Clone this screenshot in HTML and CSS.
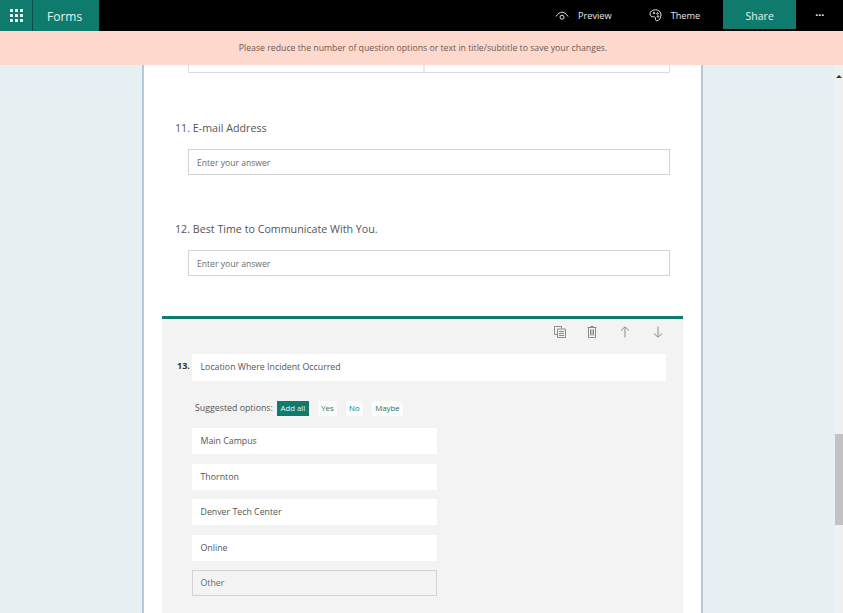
FILE: index.html
```html
<!DOCTYPE html>
<html lang="en">
<head>
<meta charset="utf-8">
<title>Forms</title>
<link rel="stylesheet" href="styles.css">
</head>
<body>
<header class="topbar">
  <div class="waffle">
    <svg width="13" height="13" viewBox="0 0 13 13" fill="#e8f7f3"><rect width="3" height="3"/><rect x="5" width="3" height="3"/><rect x="10" width="3" height="3"/><rect y="5" width="3" height="3"/><rect x="5" y="5" width="3" height="3"/><rect x="10" y="5" width="3" height="3"/><rect y="10" width="3" height="3"/><rect x="5" y="10" width="3" height="3"/><rect x="10" y="10" width="3" height="3"/></svg>
  </div>
  <div class="brand">Forms</div>
  <nav class="actions">
    <div class="action preview">
      <svg width="14" height="10" viewBox="0 0 14 10" fill="none" stroke="#e6e6e6" stroke-width="1"><path d="M1 5.500C3 2.500 5 1.200 7 1.200s4 1.300 6 4.300"/><circle cx="7" cy="6.200" r="2"/></svg>
      <span>Preview</span>
    </div>
    <div class="action theme">
      <svg width="13" height="13" viewBox="0 0 13 13" fill="none" stroke="#e6e6e6" stroke-width="1"><path d="M1 5C1 2.500 3.500.8 6.500.8S12 3 12 6c0 3-1.800 5.500-4 5.800-1 .1-1.500-.6-1.500-1.500V9C6.500 8 5.500 7.800 4.500 7.800 2.500 7.800 1 7 1 5z"/><circle cx="5" cy="4" r=".8"/><circle cx="8.500" cy="4.500" r=".8"/><circle cx="9" cy="7.500" r=".8"/></svg>
      <span>Theme</span>
    </div>
    <button class="share">Share</button>
    <div class="more">•••</div>
  </nav>
</header>
<div class="banner">Please reduce the number of question options or text in title/subtitle to save your changes.</div>
<div class="workspace">
  <main class="card">
    <div class="cut-input"><div class="cut-cell"></div><div class="cut-cell"></div></div>
    <section class="question first">
      <h2 class="q-title">11. E-mail Address</h2>
      <div class="answer">Enter your answer</div>
    </section>
    <section class="question second">
      <h2 class="q-title">12. Best Time to Communicate With You.</h2>
      <div class="answer">Enter your answer</div>
    </section>
    <section class="active">
      <div class="toolbar">
        <svg class="copy-icon" width="12" height="12" viewBox="0 0 12 12" fill="none" stroke="#8a8a8a" stroke-width="1"><path d="M.5.500h7v2M.5.500v8h3M3.500 3h8v8.500h-8zM5 5.500h5M5 7.500h5M5 9.500h5"/></svg>
        <svg width="10" height="12" viewBox="0 0 10 12" fill="none" stroke="#8a8a8a" stroke-width="1"><path d="M.5 1.500h9M3.500 1.500V.5h3v1M1.500 1.500v10h7v-10M3.500 3.500v6M5 3.500v6M6.500 3.500v6"/></svg>
        <svg width="10" height="12" viewBox="0 0 10 12" fill="none" stroke="#8a8a8a" stroke-width="1"><path d="M5 11.500V1M1 4.500L5 .8l4 3.700"/></svg>
        <svg width="10" height="12" viewBox="0 0 10 12" fill="none" stroke="#8a8a8a" stroke-width="1"><path d="M5 .5V11M1 7.500l4 3.700 4-3.700"/></svg>
      </div>
      <div class="title-row">
        <span class="num">13.</span>
        <div class="title-field">Location Where Incident Occurred</div>
      </div>
      <div class="suggest">
        <span class="suggest-label">Suggested options:</span>
        <span class="chip primary">Add all</span>
        <span class="chip yes">Yes</span>
        <span class="chip no">No</span>
        <span class="chip maybe">Maybe</span>
      </div>
      <div class="options">
        <div class="option">Main Campus</div>
        <div class="option">Thornton</div>
        <div class="option">Denver Tech Center</div>
        <div class="option">Online</div>
        <div class="option other">Other</div>
      </div>
    </section>
  </main>
  <aside class="scrollbar">
    <div class="arrow"></div>
    <div class="thumb"></div>
  </aside>
</div>
</body>
</html>
```

FILE: styles.css
```css
* { box-sizing: border-box; }
html, body { margin: 0; height: 100%; overflow: hidden; }
body {
  display: flex;
  flex-direction: column;
  height: 613px;
  font-family: "Open Sans", "Noto Sans", sans-serif;
  color: #555;
  background: #e6f0f3;
}
.topbar {
  display: flex;
  height: 31px;
  flex: none;
  background: #000;
  color: #e6e6e6;
  font-size: 9.200px;
}
.waffle {
  width: 33px;
  background: #0f7b6c;
  display: flex;
  align-items: center;
  justify-content: center;
  border-right: 1px solid #0a4f46;
}
.brand {
  width: 66px;
  background: #0f7b6c;
  color: #e4f5f1;
  font-size: 12px;
  padding-left: 14px;
  line-height: 33px;
}
.actions { display: flex; align-items: center; flex: 1; height: 100%; }
.action { display: flex; align-items: center; gap: 9px; }
.preview { margin-left: 456px; }
.theme { margin-left: 37px; }
.share {
  margin: 0 0 2px 23px;
  width: 73px;
  height: 29px;
  align-self: flex-start;
  border: 0;
  background: #0f7b6c;
  color: #e4f5f1;
  font: 10.500px "Open Sans", sans-serif;
  padding: 2px 0 0;
}
.more { margin-left: 19px; font-size: 8px; color: #eee; padding-bottom: 3px; }
.banner {
  height: 34px;
  flex: none;
  background: #fdd8cd;
  color: #6e5a55;
  font-size: 8.720px;
  text-align: center;
  line-height: 34px;
  padding-left: 3px;
}
.workspace { flex: 1; display: flex; min-height: 0; }
.card {
  width: 561px;
  margin-left: 142px;
  background: #fff;
  border-left: 2px solid #b4c8dc;
  border-right: 2px solid #b4c8dc;
  overflow: hidden;
}
.cut-input {
  display: flex;
  height: 8px;
  margin: 0 31px 0 44px;
  border: 1px solid #dcdcdc;
  border-top: 0;
}
.cut-cell { flex: 1; }
.cut-cell:first-child { flex: 0 0 236px; border-right: 2px solid #e8e8e8; }
.question { margin: 0 31px 0 31px; }
.first { padding-top: 46px; }
.second { padding-top: 45px; }
.q-title {
  margin: 0 0 12px;
  font-weight: 400;
  font-size: 10.700px;
  line-height: 18px;
  color: #555;
}
.answer {
  margin-left: 13px;
  height: 26px;
  border: 1px solid #d4d4d4;
  padding-left: 8px;
  font-size: 8.600px;
  line-height: 26px;
  color: #6b6b6b;
}
.active {
  margin: 40px 18px 0 18px;
  height: 300px;
  background: #f3f3f3;
  border-top: 3px solid #0f7b6c;
  padding: 0 17px 0 15px;
}
.toolbar {
  display: flex;
  justify-content: flex-end;
  align-items: center;
  gap: 23px;
  height: 24px;
  padding-right: 3px;
  margin-top: 1px;
}
.copy-icon { margin-right: -2px; }
.title-row { display: flex; margin-top: 10px; }
.num {
  width: 15px;
  font-size: 9px;
  font-weight: 700;
  color: #333;
  line-height: 24px;
}
.title-field {
  flex: 1;
  height: 27px;
  background: #fff;
  padding-left: 8.500px;
  font-size: 8.800px;
  line-height: 27px;
}
.suggest {
  display: flex;
  align-items: center;
  height: 16px;
  margin: 19px 0 0 18px;
  font-size: 8.800px;
}
.suggest-label { margin-right: 4px; }
.chip {
  height: 15px;
  background: #fbfbfb;
  color: #17786b;
  font-size: 7.800px;
  line-height: 15px;
  text-align: center;
}
.primary { width: 32px; background: #0f7b6c; color: #e4f5f1; margin-right: 9px; }
.yes { width: 19px; margin-right: 9px; }
.no { width: 17px; margin-right: 9px; }
.maybe { width: 31px; }
.options {
  display: flex;
  flex-direction: column;
  gap: 9.500px;
  width: 245px;
  margin: 12px 0 0 15px;
}
.option {
  height: 26px;
  background: #fff;
  padding-left: 8.500px;
  font-size: 8.800px;
  line-height: 26px;
}
.other {
  border: 1px solid #d2d2d2;
  background: #f3f3f3;
  padding-left: 7.500px;
  line-height: 24px;
  color: #6b6b6b;
}
.scrollbar {
  position: relative;
  width: 8px;
  margin-left: 132px;
  background: #eff0f0;
}
.arrow {
  position: absolute;
  top: 10px;
  left: 1px;
  border: 3px solid transparent;
  border-top: 0;
  border-bottom: 3px solid #333;
}
.thumb {
  position: absolute;
  top: 369px;
  left: 0;
  width: 8px;
  height: 91px;
  background: #c2c2c2;
}
```
